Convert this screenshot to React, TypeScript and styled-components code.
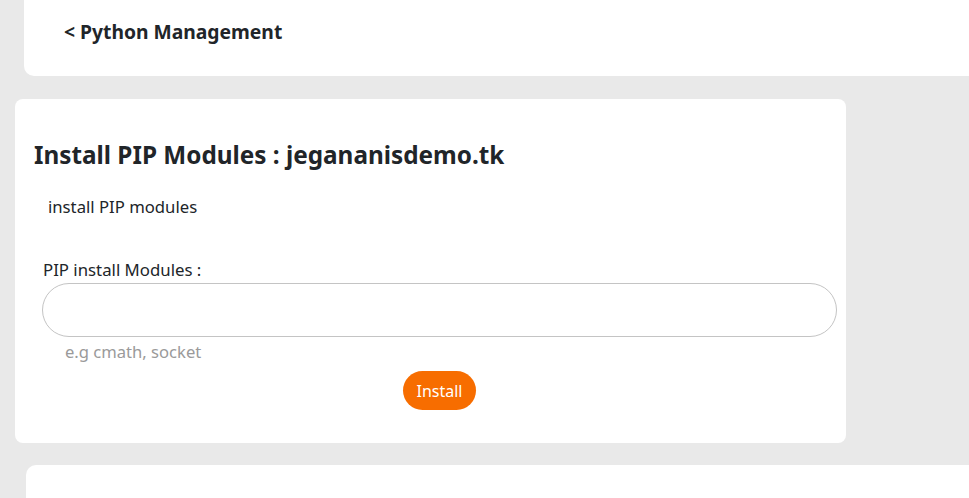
import React from "react";
import styled, { createGlobalStyle } from "styled-components";

const Global = createGlobalStyle`
  html, body { margin: 0; padding: 0; background: #e9e9e9; }
  body { font-family: "Noto Sans", "Open Sans", sans-serif; color: #212529; }
  * { box-sizing: border-box; }
`;

const Page = styled.div`
  display: flex;
  flex-direction: column;
  height: 498px;
  overflow: hidden;
`;

const HeaderCard = styled.div`
  margin-left: 24px;
  height: 76px;
  background: #fff;
  border-bottom-left-radius: 10px;
  display: flex;
  align-items: center;
  padding-left: 40px;
  padding-bottom: 14px;
`;

const BackTitle = styled.h1`
  margin: 0;
  font-size: 19.3px;
  font-weight: 700;
  color: #212529;
`;

const Card = styled.section`
  margin: 23px 0 0 15px;
  width: 831px;
  height: 344px;
  background: #fff;
  border-radius: 8px;
  padding: 40px 10px 0 19px;
  display: flex;
  flex-direction: column;
`;

const Heading = styled.h2`
  margin: 0;
  font-size: 24.3px;
  font-weight: 700;
  line-height: 32px;
  color: #212529;
`;

const Description = styled.p`
  margin: 25px 0 0 14px;
  font-size: 16.7px;
  line-height: 22px;
`;

const Form = styled.div`
  margin: 40px 0 0 8px;
  display: flex;
  flex-direction: column;
`;

const Label = styled.label`
  font-size: 16.8px;
  line-height: 23px;
  margin-left: 1px;
`;

const Input = styled.input`
  margin-top: 2px;
  width: 795px;
  height: 54px;
  border: 1px solid #c4c4c4;
  border-radius: 27px;
  background: #fff;
  outline: none;
  padding: 0 20px;
  font-size: 16px;
`;

const Hint = styled.span`
  margin: 5px 0 0 23px;
  font-size: 16.6px;
  line-height: 20px;
  color: #9a9a9a;
`;

const ButtonRow = styled.div`
  width: 795px;
  display: flex;
  justify-content: center;
  margin-top: 9px;
`;

const InstallButton = styled.button`
  height: 39px;
  padding: 0 14px;
  border: none;
  border-radius: 20px;
  background: #f76d00;
  color: #fff;
  font-family: inherit;
  font-size: 16px;
  cursor: pointer;
`;

const FooterCard = styled.div`
  margin: 22px 0 0 26px;
  flex: 1;
  background: #fff;
  border-top-left-radius: 10px;
`;

export default function App() {
  return (
    <>
      <Global />
      <Page>
        <HeaderCard>
          <BackTitle>&lt; Python Management</BackTitle>
        </HeaderCard>
        <Card>
          <Heading>Install PIP Modules : jegananisdemo.tk</Heading>
          <Description>install PIP modules</Description>
          <Form>
            <Label>PIP install Modules :</Label>
            <Input type="text" />
            <Hint>e.g cmath, socket</Hint>
            <ButtonRow>
              <InstallButton>Install</InstallButton>
            </ButtonRow>
          </Form>
        </Card>
        <FooterCard />
      </Page>
    </>
  );
}
